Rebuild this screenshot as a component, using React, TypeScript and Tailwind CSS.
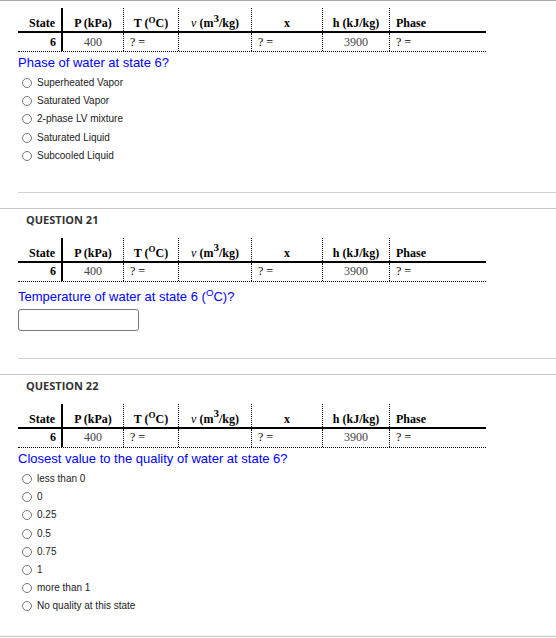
import React from "react";

const serif = "font-['Liberation_Serif','Times_New_Roman',serif]";

function StateTable() {
  return (
    <div className={`w-[468px] ${serif} text-[12px] leading-[15px] text-black`}>
      {/* Header */}
      <div className="flex h-[25px] border-b-2 border-black font-bold">
        <div className="w-[45px] flex items-end justify-end pr-[6px] border-r-2 border-black">State</div>
        <div className="w-[61px] flex items-end justify-center border-r border-dotted border-black">P (kPa)</div>
        <div className="w-[55px] flex items-end justify-center border-r border-dotted border-black">
          <span>
            T (<sup>O</sup>C)
          </span>
        </div>
        <div className="w-[73px] flex items-end justify-center border-r border-dotted border-black">
          <span>
            <i className="font-normal">v</i> (m<sup className="text-[11px]">3</sup>/kg)
          </span>
        </div>
        <div className="w-[71px] flex items-end justify-center border-r border-dotted border-black">x</div>
        <div className="w-[67px] flex items-end justify-center border-r border-dotted border-black">h (kJ/kg)</div>
        <div className="w-[96px] flex items-end pl-[6px]">Phase</div>
      </div>
      {/* Body */}
      <div className="flex h-[19px] border-b border-dotted border-black">
        <div className="w-[45px] flex items-center justify-end pr-[5px] font-bold border-r-2 border-black">6</div>
        <div className="w-[61px] flex items-center justify-center text-[#444] border-r border-dotted border-black">400</div>
        <div className="w-[55px] flex items-center pl-[6px] border-r border-dotted border-black">? =</div>
        <div className="w-[73px] border-r border-dotted border-black" />
        <div className="w-[71px] flex items-center pl-[6px] border-r border-dotted border-black">? =</div>
        <div className="w-[67px] flex items-center justify-center text-[#444] border-r border-dotted border-black">3900</div>
        <div className="w-[96px] flex items-center pl-[6px]">? =</div>
      </div>
    </div>
  );
}

function Options({ items }: { items: string[] }) {
  return (
    <div className="flex flex-col">
      {items.map((label) => (
        <label key={label} className="flex items-center h-[18.2px] pl-[4px]">
          <span className="w-[10px] h-[10px] rounded-full border border-[#767676] bg-white shrink-0" />
          <span className="ml-[5px] text-[10px] leading-[12px] text-[#222]">{label}</span>
        </label>
      ))}
    </div>
  );
}

function QuestionLabel({ n }: { n: number }) {
  return (
    <div className="pl-[26px] pt-[3px] font-['Open_Sans',sans-serif] font-bold text-[11px] leading-[15px] text-[#333]">
      QUESTION {n}
    </div>
  );
}

function Prompt({ children }: { children: React.ReactNode }) {
  return <p className="text-[13px] leading-[15px] text-[#0000ff]">{children}</p>;
}

export default function App() {
  return (
    <div className="w-[556px] h-[638px] overflow-hidden bg-white border-t border-[#aaaaaa] font-['Liberation_Sans',Arial,sans-serif]">
      {/* Question 20 (tail) */}
      <div className="pl-[18px]">
        <div className="pt-[7px]">
          <StateTable />
        </div>
        <div className="mt-[3px]">
          <Prompt>Phase of water at state 6?</Prompt>
        </div>
        <div className="mt-[4px]">
          <Options
            items={[
              "Superheated Vapor",
              "Saturated Vapor",
              "2-phase LV mixture",
              "Saturated Liquid",
              "Subcooled Liquid",
            ]}
          />
        </div>
        <div className="mt-[27px] border-t border-[#d3d3d3]" />
      </div>

      {/* Question 21 */}
      <div className="mt-[15px] border-t border-[#c6c6c6]">
        <QuestionLabel n={21} />
        <div className="pl-[18px]">
          <div className="mt-[11px]">
            <StateTable />
          </div>
          <div className="mt-[7px]">
            <Prompt>
              Temperature of water at state 6 (<sup>O</sup>C)?
            </Prompt>
          </div>
          <input
            type="text"
            className="mt-[5px] block w-[121px] h-[22px] rounded-[3px] border border-[#767676] bg-white outline-none"
          />
          <div className="mt-[27px] border-t border-[#d3d3d3]" />
        </div>
      </div>

      {/* Question 22 */}
      <div className="mt-[15px] border-t border-[#c6c6c6]">
        <QuestionLabel n={22} />
        <div className="pl-[18px]">
          <div className="mt-[11px]">
            <StateTable />
          </div>
          <div className="mt-[3px]">
            <Prompt>Closest value to the quality of water at state 6?</Prompt>
          </div>
          <div className="mt-[4px]">
            <Options
              items={[
                "less than 0",
                "0",
                "0.25",
                "0.5",
                "0.75",
                "1",
                "more than 1",
                "No quality at this state",
              ]}
            />
          </div>
        </div>
        <div className="mt-[21px] border-t border-[#c8c8c8] shadow-[0_-1px_2px_rgba(0,0,0,0.08)]" />
      </div>
    </div>
  );
}
